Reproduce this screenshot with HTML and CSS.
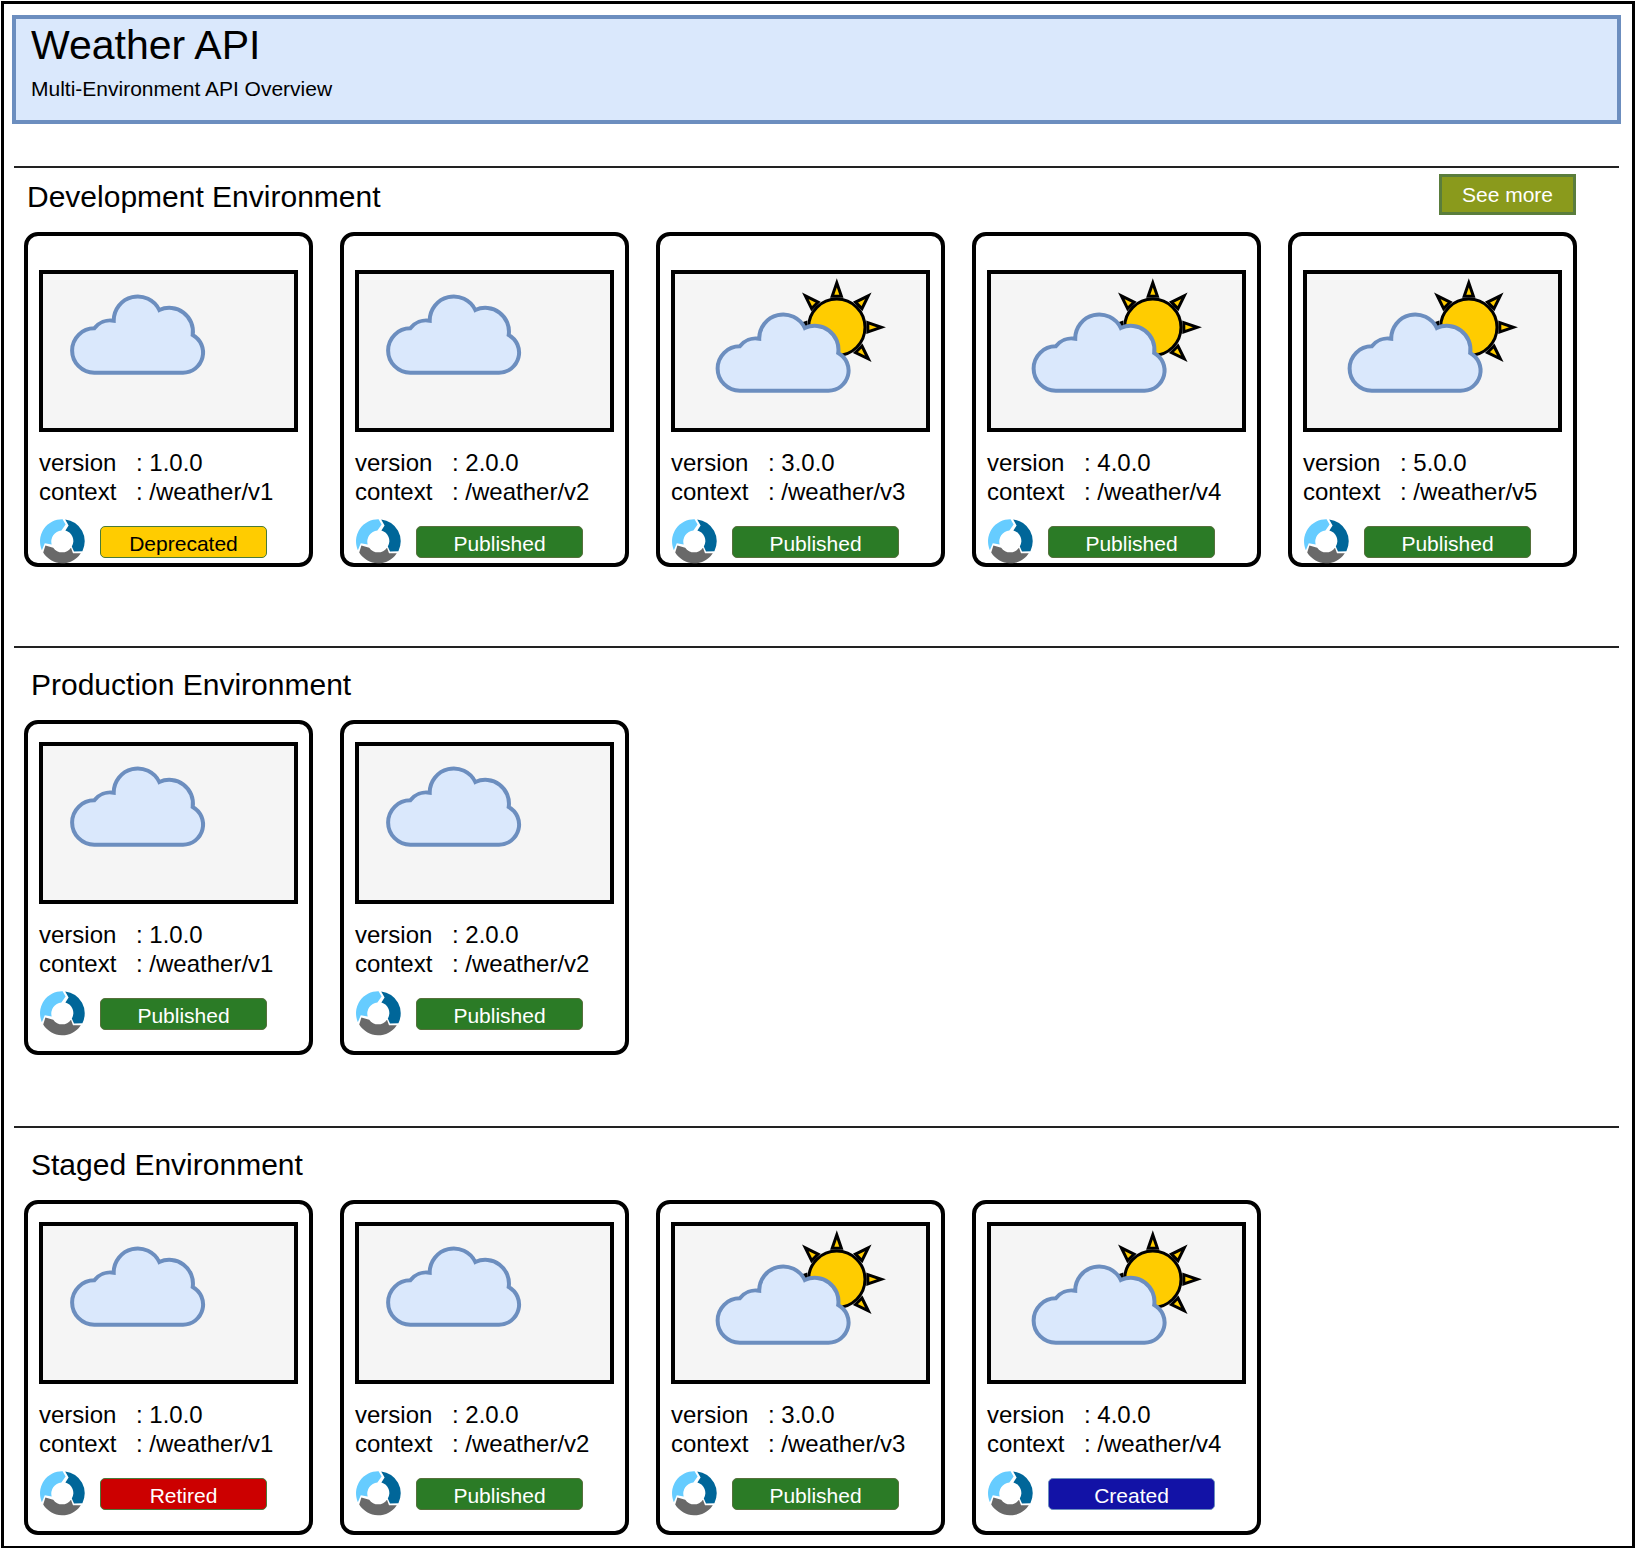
FILE: index.html
```html
<!DOCTYPE html>
<html lang="en">
<head>
    <meta charset="UTF-8">
    <meta name="viewport" content="width=device-width, initial-scale=1.0">
    <title>Weather API</title>
    <link rel="stylesheet" href="styles.css">
</head>

<body>
    <!-- Shared drawings -->
    <svg class="defs" width="0" height="0" aria-hidden="true">
        <symbol id="cloud" viewBox="0 0 251 154">
            <path class="cloud-shape" d="M51.3 98.7 A22.2 22.2 0 0 1 51.3 54.3 A20 20 0 0 1 70.7 46.7 A24 24 0 0 1 116.3 36 A23.7 23.7 0 0 1 149.7 61 A20.1 20.1 0 0 1 140 98.7 Z"/>
        </symbol>
        <symbol id="cloud-sun" viewBox="0 0 251 154">
            <g class="sun-shape" transform="translate(161.8 53.3)">
                <circle r="28.2"/>
                <path d="M-4.6 -31 L0 -44.5 L4.6 -31 Z"/>
                <path d="M-4.6 -31 L0 -44.5 L4.6 -31 Z" transform="rotate(45)"/>
                <path d="M-4.6 -31 L0 -44.5 L4.6 -31 Z" transform="rotate(90)"/>
                <path d="M-4.6 -31 L0 -44.5 L4.6 -31 Z" transform="rotate(135)"/>
                <path d="M-4.6 -31 L0 -44.5 L4.6 -31 Z" transform="rotate(270)"/>
                <path d="M-4.6 -31 L0 -44.5 L4.6 -31 Z" transform="rotate(315)"/>
            </g>
            <path class="cloud-shape" transform="translate(13.5 18)" d="M51.3 98.7 A22.2 22.2 0 0 1 51.3 54.3 A20 20 0 0 1 70.7 46.7 A24 24 0 0 1 116.3 36 A23.7 23.7 0 0 1 149.7 61 A20.1 20.1 0 0 1 140 98.7 Z"/>
        </symbol>
        <symbol id="cycle" viewBox="0 0 45 45">
            <path fill="#66ccff" d="M1.9 31.2 A22.1 22.1 0 0 1 22.6 0.2 L25.6 5.6 L21.4 11.6 A11 11 0 0 0 11.7 25.6 L4.8 24.2 Z"/>
            <path fill="#006699" d="M25.2 0.4 A22.1 22.1 0 0 1 42.4 32.2 L34 32.4 L31.8 27.6 A11 11 0 0 0 25.4 11.4 L28.6 6.4 Z"/>
            <path fill="#696969" d="M3.2 33.4 A22.1 22.1 0 0 0 40.8 34.2 L33 34.2 L31 28.8 A11 11 0 0 1 13.2 28.8 L5.4 26.6 Z"/>
        </symbol>
    </svg>

    <div class="page">
        <header class="banner">
            <h1>Weather API</h1>
            <p>Multi-Environment API Overview</p>
        </header>

        <main>
            <!-- Development -->
            <section class="environment">
                <div class="environment-head has-action">
                    <h2>Development Environment</h2>
                    <button type="button" class="see-more">See more</button>
                </div>
                <div class="cards cards-low">
                    <article class="card">
                        <div class="thumb"><svg><use href="#cloud"/></svg></div>
                        <dl>
                            <dt>version</dt><dd>: 1.0.0</dd>
                            <dt>context</dt><dd>: /weather/v1</dd>
                        </dl>
                        <div class="card-foot">
                            <svg class="cycle"><use href="#cycle"/></svg>
                            <span class="status deprecated">Deprecated</span>
                        </div>
                    </article>
                    <article class="card">
                        <div class="thumb"><svg><use href="#cloud"/></svg></div>
                        <dl>
                            <dt>version</dt><dd>: 2.0.0</dd>
                            <dt>context</dt><dd>: /weather/v2</dd>
                        </dl>
                        <div class="card-foot">
                            <svg class="cycle"><use href="#cycle"/></svg>
                            <span class="status published">Published</span>
                        </div>
                    </article>
                    <article class="card">
                        <div class="thumb"><svg><use href="#cloud-sun"/></svg></div>
                        <dl>
                            <dt>version</dt><dd>: 3.0.0</dd>
                            <dt>context</dt><dd>: /weather/v3</dd>
                        </dl>
                        <div class="card-foot">
                            <svg class="cycle"><use href="#cycle"/></svg>
                            <span class="status published">Published</span>
                        </div>
                    </article>
                    <article class="card">
                        <div class="thumb"><svg><use href="#cloud-sun"/></svg></div>
                        <dl>
                            <dt>version</dt><dd>: 4.0.0</dd>
                            <dt>context</dt><dd>: /weather/v4</dd>
                        </dl>
                        <div class="card-foot">
                            <svg class="cycle"><use href="#cycle"/></svg>
                            <span class="status published">Published</span>
                        </div>
                    </article>
                    <article class="card">
                        <div class="thumb"><svg><use href="#cloud-sun"/></svg></div>
                        <dl>
                            <dt>version</dt><dd>: 5.0.0</dd>
                            <dt>context</dt><dd>: /weather/v5</dd>
                        </dl>
                        <div class="card-foot">
                            <svg class="cycle"><use href="#cycle"/></svg>
                            <span class="status published">Published</span>
                        </div>
                    </article>
                </div>
            </section>

            <!-- Production -->
            <section class="environment">
                <div class="environment-head">
                    <h2>Production Environment</h2>
                </div>
                <div class="cards">
                    <article class="card">
                        <div class="thumb"><svg><use href="#cloud"/></svg></div>
                        <dl>
                            <dt>version</dt><dd>: 1.0.0</dd>
                            <dt>context</dt><dd>: /weather/v1</dd>
                        </dl>
                        <div class="card-foot">
                            <svg class="cycle"><use href="#cycle"/></svg>
                            <span class="status published">Published</span>
                        </div>
                    </article>
                    <article class="card">
                        <div class="thumb"><svg><use href="#cloud"/></svg></div>
                        <dl>
                            <dt>version</dt><dd>: 2.0.0</dd>
                            <dt>context</dt><dd>: /weather/v2</dd>
                        </dl>
                        <div class="card-foot">
                            <svg class="cycle"><use href="#cycle"/></svg>
                            <span class="status published">Published</span>
                        </div>
                    </article>
                </div>
            </section>

            <!-- Staged -->
            <section class="environment">
                <div class="environment-head">
                    <h2>Staged Environment</h2>
                </div>
                <div class="cards">
                    <article class="card">
                        <div class="thumb"><svg><use href="#cloud"/></svg></div>
                        <dl>
                            <dt>version</dt><dd>: 1.0.0</dd>
                            <dt>context</dt><dd>: /weather/v1</dd>
                        </dl>
                        <div class="card-foot">
                            <svg class="cycle"><use href="#cycle"/></svg>
                            <span class="status retired">Retired</span>
                        </div>
                    </article>
                    <article class="card">
                        <div class="thumb"><svg><use href="#cloud"/></svg></div>
                        <dl>
                            <dt>version</dt><dd>: 2.0.0</dd>
                            <dt>context</dt><dd>: /weather/v2</dd>
                        </dl>
                        <div class="card-foot">
                            <svg class="cycle"><use href="#cycle"/></svg>
                            <span class="status published">Published</span>
                        </div>
                    </article>
                    <article class="card">
                        <div class="thumb"><svg><use href="#cloud-sun"/></svg></div>
                        <dl>
                            <dt>version</dt><dd>: 3.0.0</dd>
                            <dt>context</dt><dd>: /weather/v3</dd>
                        </dl>
                        <div class="card-foot">
                            <svg class="cycle"><use href="#cycle"/></svg>
                            <span class="status published">Published</span>
                        </div>
                    </article>
                    <article class="card">
                        <div class="thumb"><svg><use href="#cloud-sun"/></svg></div>
                        <dl>
                            <dt>version</dt><dd>: 4.0.0</dd>
                            <dt>context</dt><dd>: /weather/v4</dd>
                        </dl>
                        <div class="card-foot">
                            <svg class="cycle"><use href="#cycle"/></svg>
                            <span class="status created">Created</span>
                        </div>
                    </article>
                </div>
            </section>
        </main>
    </div>
</body>
</html>
```
FILE: styles.css
```css
* {
    box-sizing: border-box;
}

body {
    margin: 0;
    padding: 1px 0 0 1px;
    font-family: "Liberation Sans", Arial, Helvetica, sans-serif;
    color: #000;
    background: #fff;
}

h1, h2, p, dl, dd {
    margin: 0;
    font-weight: normal;
}

.defs {
    position: absolute;
}

.page {
    border: 3px solid #000;
    padding: 11px 11px 11px 8px;
}

/* Banner */
.banner {
    min-height: 109px;
    padding: 2px 15px;
    background: #dae8fc;
    border: 4px solid #6c8ebf;
}

.banner h1 {
    font-size: 41px;
    line-height: 48px;
}

.banner p {
    margin-top: 8px;
    font-size: 21px;
    line-height: 24px;
}

/* Environments */
main {
    padding: 42px 2px 0 2px;
}

.environment {
    min-height: 480px;
    border-top: 2px solid #222;
}

.environment:last-child {
    min-height: 0;
}

.environment-head {
    display: flex;
    align-items: flex-end;
    justify-content: space-between;
    padding: 19px 43px 17px 17px;
}

.environment-head.has-action {
    padding-top: 6px;
    padding-left: 13px;
}

.environment-head h2 {
    font-size: 30px;
    line-height: 36px;
}

.see-more {
    width: 137px;
    height: 41px;
    padding: 0;
    font-family: inherit;
    font-size: 21px;
    color: #fff;
    background: #8a9a1c;
    border: 3px solid #5a7d3c;
    cursor: pointer;
}

/* Cards */
.cards {
    display: flex;
    flex-wrap: wrap;
    gap: 27px;
    padding-left: 10px;
}

.card {
    width: 289px;
    height: 335px;
    padding: 18px 11px 0;
    background: #fff;
    border: 4px solid #000;
    border-radius: 14px;
}

.cards-low .card {
    padding-top: 34px;
}

.thumb {
    height: 162px;
    background: #f5f5f5;
    border: 4px solid #000;
}

.thumb svg {
    display: block;
    width: 100%;
    height: 100%;
}

.card dl {
    display: grid;
    grid-template-columns: 97px 1fr;
    margin-top: 16px;
    font-size: 24px;
    line-height: 29px;
}

.card-foot {
    display: flex;
    align-items: center;
    gap: 15px;
    margin-top: 13px;
    padding-left: 1px;
}

.cycle {
    width: 45px;
    height: 45px;
}

.status {
    width: 167px;
    height: 32px;
    padding-top: 2px;
    font-size: 21px;
    line-height: 30px;
    text-align: center;
    color: #fff;
    border: 1px solid #4a7a3a;
    border-radius: 5px;
}

.published {
    background: #2b7b26;
    border-color: #56703c;
}

.deprecated {
    color: #000;
    background: #ffcc00;
}

.retired {
    background: #cc0000;
}

.created {
    background: #1212a6;
    border-color: #6c8ebf;
}

/* Drawings */
.cloud-shape {
    fill: #dae8fc;
    stroke: #6c8ebf;
    stroke-width: 4px;
}

.sun-shape {
    fill: #ffcc00;
    stroke: #000;
    stroke-width: 3px;
}
```
